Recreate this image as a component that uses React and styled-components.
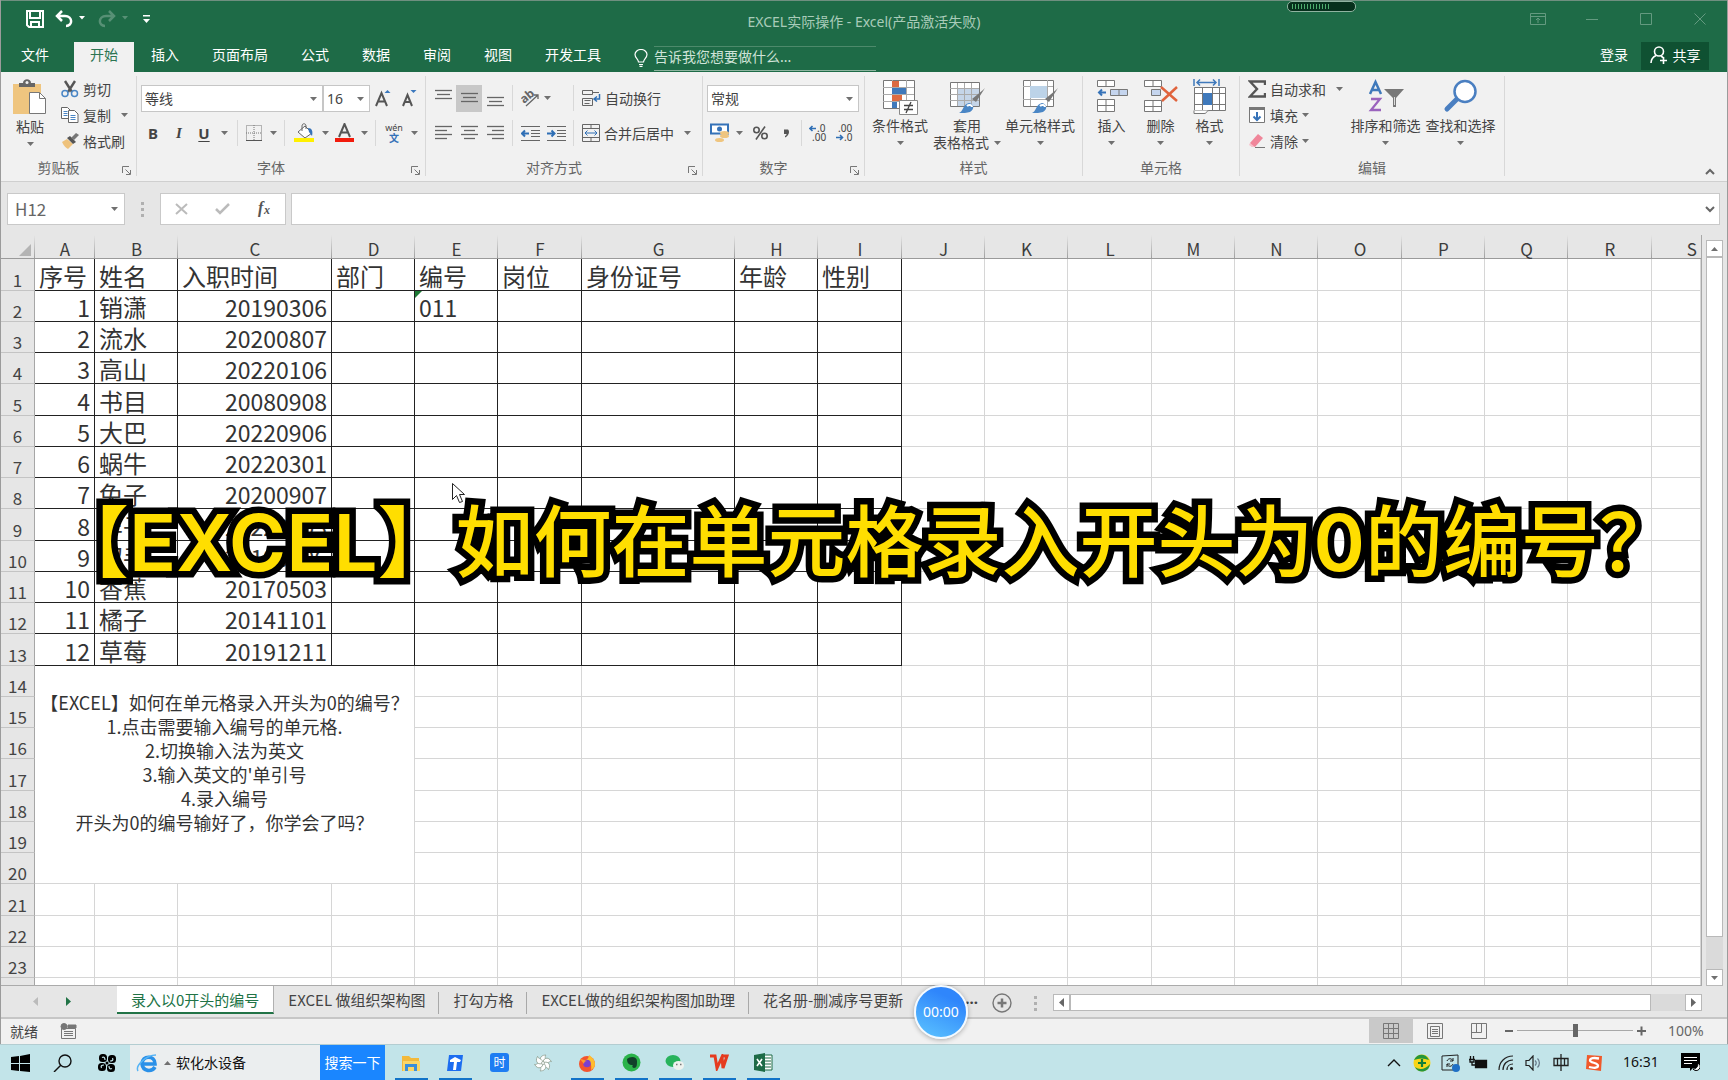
import React from 'react';
import styled, { createGlobalStyle, css } from 'styled-components';

const GlobalStyle = createGlobalStyle`
  * {
    box-sizing: border-box;
  }
  body {
    margin: 0;
    background: #c2e4e9;
    font-family: "Noto Sans", "Noto Sans CJK SC", sans-serif;
    font-size: 14px;
    color: #444;
  }
  button, input, select {
    font: inherit;
    color: inherit;
    border: 0;
    padding: 0;
    margin: 0;
    background: none;
    border-radius: 0;
  }
  svg {
    display: block;
    flex: none;
  }
`
const Screen = styled.div`
  position: relative;
  height: 100vh;
  display: flex;
  flex-direction: column;
  overflow: hidden;
`
const ExcelWindow = styled.div`
  flex: 1;
  min-height: 0;
  display: flex;
  flex-direction: column;
  border-left: 1px solid #9b9b9b;
  border-right: 1px solid #9b9b9b;
  background: #e6e6e6;
`

/* title bar */
const Header = styled.header`
  background: #1e6b47;
  border-top: 1px solid #6f8f80;
  color: #fff;
`
const TitleRow = styled.div`
  display: grid;
  grid-template-columns: 1fr auto 1fr;
  align-items: center;
  height: 41px;
`
const QuickBar = styled.div`
  display: flex;
  align-items: center;
  padding: 0 0 6px 24px;
  gap: 5px;
`
const QuickButton = styled.button`
  display: flex;
  align-items: center;
  justify-content: center;
  width: ${(p) => p.$w || 20}px;
  height: 24px;
  opacity: ${(p) => (p.$dim ? 0.25 : 1)};
`
const Title = styled.h1`
  margin: 0;
  padding-bottom: 2px;
  font-size: 14px;
  font-weight: 400;
  color: #a9cbb9;
`
const WindowButtons = styled.div`
  display: flex;
  justify-content: flex-end;
  padding-bottom: 6px;
  color: #649a80;
`
const WindowButton = styled.button`
  display: flex;
  align-items: center;
  justify-content: center;
  width: 54px;
  height: 24px;
`
const TabRow = styled.nav`
  display: flex;
  align-items: stretch;
  height: 30px;
  gap: 1px;
`
const Tab = styled.button`
  padding: 0 16px 4px;
  line-height: 20px;
  color: ${(p) => (p.$active ? '#2c7452' : '#fff')};
  background: ${(p) => (p.$active ? '#f1f1f1' : 'transparent')};
`
const FileTab = styled(Tab)`
  width: 68px;
  margin-right: 4px;
`
const SignIn = styled(Tab)`
  padding: 0 12px 4px;
`
const TellMe = styled.label`
  display: flex;
  align-items: center;
  gap: 6px;
  padding: 4px 0 2px 16px;
  margin-right: auto;
`
const TellMeInput = styled.input`
  width: 222px;
  height: 25px;
  padding-bottom: 3px;
  border-top: 1px solid #4d8a6b;
  border-bottom: 1px solid #8db5a0;
  &::placeholder {
    color: #cfe3d8;
    opacity: 1;
  }
`
const ShareButton = styled.button`
  display: flex;
  align-items: center;
  justify-content: center;
  gap: 5px;
  width: 68px;
  height: 28px;
  padding-bottom: 2px;
  margin-right: 18px;
  background: #0f5132;
  color: #fff;
`

/* ribbon */
const Ribbon = styled.section`
  display: flex;
  height: 110px;
  padding: 4px 0 5px;
  background: #f1f1f1;
  border-bottom: 1px solid #cfcfcf;
`
const GroupBox = styled.div`
  display: flex;
  flex-direction: column;
  flex: 0 0 ${(p) => p.$w}px;
  border-right: 1px solid #d8d8d8;
`
const GroupBody = styled.div`
  display: flex;
  flex: 1;
  padding-left: ${(p) => p.$pad || 4}px;
`
const GroupFoot = styled.div`
  display: flex;
  align-items: center;
  height: 18px;
  padding-right: ${(p) => (p.$launcher ? 5 : 0)}px;
  color: #666;
  span {
    flex: 1;
    padding-right: ${(p) => (p.$launcher ? 6 : 0)}px;
    text-align: center;
  }
`
const Launcher = styled.button`
  padding-top: 6px;
`
const Lines = styled.div`
  display: flex;
  flex-direction: column;
  gap: 7px;
  padding-top: 8px;
`
const Line = styled.div`
  display: flex;
  align-items: center;
  height: 28px;
`
const Tool = styled.button`
  display: flex;
  align-items: center;
  justify-content: center;
  width: ${(p) => p.$w || 26}px;
  height: 27px;
  background: ${(p) => (p.$on ? '#c8c8c8' : 'transparent')};
`
const Letter = styled.span`
  font-family: "Noto Sans", sans-serif;
  font-size: 15px;
  font-weight: 700;
  ${(p) => p.$italic && css`
    font-family: "Liberation Serif", serif;
    font-style: italic;
  `}
  ${(p) => p.$under && css`
    text-decoration: underline;
    text-underline-offset: 2px;
  `}
`
const Divider = styled.i`
  width: 1px;
  height: 26px;
  margin: 0 4px;
  background: #d8d8d8;
`
const TextTool = styled.button`
  display: flex;
  align-items: center;
  gap: 4px;
  height: 26px;
  padding: 0 4px;
  white-space: nowrap;
`
const FarCaret = styled.span`
  padding-left: ${(p) => p.$gap || 6}px;
`
const Stack = styled.div`
  width: ${(p) => p.$w}px;
`
const BigTool = styled.button`
  display: flex;
  flex-direction: column;
  align-items: center;
  align-self: flex-start;
  width: ${(p) => p.$w || 49}px;
  padding-top: 3px;
  line-height: 17px;
  white-space: nowrap;
  > svg {
    margin-bottom: 2px;
  }
`
const BigCaret = styled.span`
  display: flex;
  align-items: center;
  gap: 5px;
  height: 17px;
`
const SelectBox = styled.label`
  position: relative;
  display: flex;
  width: ${(p) => p.$w}px;
  height: 27px;
  background: #fff;
  border: 1px solid #c6c6c6;
  select {
    flex: 1;
    appearance: none;
    padding-left: 3px;
  }
  svg {
    position: absolute;
    right: 5px;
    top: 11px;
    pointer-events: none;
  }
`
const Collapse = styled.button`
  margin: auto 12px 0 auto;
  padding-bottom: 1px;
`

/* formula bar */
const FormulaBar = styled.div`
  display: flex;
  align-items: center;
  padding: 11px 7px 10px 6px;
  height: 53px;
`
const NameBox = styled.label`
  display: flex;
  align-items: center;
  width: 118px;
  height: 32px;
  padding: 0 6px 0 7px;
  background: #fff;
  border: 1px solid #c9c9c9;
  input {
    flex: 1;
    min-width: 0;
    padding-bottom: 2px;
    font-family: "Noto Sans CJK SC", sans-serif;
    font-size: 17px;
    color: #666;
  }
`
const Dots = styled.span`
  display: grid;
  gap: 3px;
  width: 3px;
  margin: ${(p) => p.$top || 0}px ${(p) => p.$m}px 0;
  i {
    width: 3px;
    height: 3px;
    background: #b0b0b0;
  }
`
const FormulaButtons = styled.div`
  display: grid;
  grid-template-columns: repeat(3, 1fr);
  align-items: center;
  justify-items: center;
  width: 126px;
  height: 32px;
  margin-right: 5px;
  background: #fff;
  border: 1px solid #c9c9c9;
`
const FormulaInput = styled.label`
  display: flex;
  align-items: center;
  flex: 1;
  height: 32px;
  padding-right: 4px;
  background: #fff;
  border: 1px solid #c9c9c9;
  input {
    flex: 1;
  }
`

/* sheet */
const SheetArea = styled.main`
  display: flex;
  flex: 1;
  min-height: 0;
`
const SheetView = styled.div`
  flex: 1;
  overflow: hidden;
  border-right: 1px solid #a8a8a8;
  border-bottom: 1px solid #ababab;
  background: #fff;
`
const Sheet = styled.table`
  width: 100%;
  table-layout: fixed;
  border-collapse: separate;
  border-spacing: 0;
  font-family: "Noto Sans CJK SC", sans-serif;
  tbody tr {
    height: 31px;
  }
  tbody tr:nth-child(4n + 1) {
    height: 32px;
  }
`
const ColHead = styled.th`
  height: 24px;
  padding: 4px 0 0;
  line-height: 19px;
  font-size: 17px;
  font-weight: 400;
  color: #3c3c3c;
  border-bottom: 1px solid #9a9a9a;
  background: linear-gradient(#e6e6e6, #a0a0a0) right / 1px 100% no-repeat #e6e6e6;
  &:last-child {
    text-align: right;
    padding-right: 4px;
    background: #e6e6e6;
  }
  svg {
    margin: 2px 4px 0 auto;
  }
`
const RowHead = styled.th`
  padding: 10px 0 0;
  line-height: 20px;
  font-size: 17px;
  font-weight: 400;
  color: #444;
  background: #e6e6e6;
  border-right: 1px solid #a6a6a6;
  border-bottom: 1px solid #c4c4c4;
`
const Cell = styled.td`
  position: relative;
  padding: 2px 4px 0;
  line-height: 26px;
  font-size: ${(p) => (p.$num ? 23 : 24)}px;
  color: #333;
  white-space: nowrap;
  text-align: ${(p) => (p.$right ? 'right' : 'left')};
  border-right: 1px solid ${(p) => (p.$framed ? '#222' : '#d6d6d6')};
  border-bottom: 1px solid ${(p) => (p.$framed ? '#222' : '#d6d6d6')};
`
const TextMark = styled.i`
  position: absolute;
  left: 0;
  top: 0;
  border-top: 7px solid #1d7a35;
  border-right: 7px solid transparent;
`
const NoteCell = styled.td`
  padding: 0 0 25px;
  vertical-align: middle;
  text-align: center;
  white-space: nowrap;
  font-size: 18px;
  line-height: 24px;
  color: #333;
  border-right: 1px solid #d6d6d6;
  border-bottom: 1px solid #d6d6d6;
  p {
    margin: 0;
  }
`
const VScroll = styled.div`
  display: flex;
  flex-direction: column;
  width: 17px;
  margin: 5px 4px 0;
`
const ScrollButton = styled.button`
  display: flex;
  align-items: center;
  justify-content: center;
  flex: none;
  width: 17px;
  height: 17px;
  background: #fff;
  border: 1px solid #b9b9b9;
`
const VTrack = styled.div`
  flex: 1;
  padding-bottom: 32px;
  background: #dadada;
`
const Thumb = styled.div`
  height: 100%;
  flex: 1;
  background: #fff;
  border: 1px solid #b9b9b9;
`

/* sheet tabs */
const SheetTabs = styled.div`
  display: flex;
  align-items: flex-start;
  height: 33px;
  border-bottom: 2px solid #c6c6c6;
  font-size: 15px;
`
const TabArrows = styled.div`
  display: flex;
  width: 116px;
  padding-left: 18px;
  button {
    display: flex;
    justify-content: center;
    align-items: center;
    width: 33px;
    height: 30px;
  }
`
const SheetTab = styled.button`
  height: 28px;
  padding: 0 14px 2px;
  line-height: 20px;
  font-family: "Noto Sans CJK SC", sans-serif;
  white-space: nowrap;
  background: linear-gradient(#a8a8a8, #a8a8a8) right 5px / 1px 22px no-repeat;
  ${(p) => p.$active && css`
    padding: 2px 14px 0;
    color: #217346;
    background: #fff;
    border-right: 1px solid #b0b0b0;
    border-bottom: 2px solid #217346;
  `}
  &:last-of-type {
    background: none;
  }
`
const More = styled.span`
  margin: 2px 14px 0 48px;
  font-weight: 700;
`
const AddSheet = styled.button`
  margin: 7px 22px 0 0;
`
const HScroll = styled.div`
  display: flex;
  flex: 1;
  height: 17px;
  margin: 8px 25px 0 16px;
`
const HTrack = styled.div`
  display: flex;
  flex: 1;
  padding-right: 34px;
  background: #dadada;
`

/* status bar */
const StatusBar = styled.footer`
  display: flex;
  align-items: center;
  height: 25px;
  padding: 0 22px 2px 9px;
  background: #f1f1f1;
  gap: 22px;
`
const Views = styled.div`
  display: flex;
  margin-left: auto;
`
const ViewButton = styled.button`
  display: flex;
  align-items: center;
  justify-content: center;
  width: 44px;
  height: 25px;
  background: ${(p) => (p.$on ? '#c9c9c9' : 'transparent')};
`
const Zoom = styled.div`
  display: flex;
  align-items: center;
  gap: 4px;
  margin-left: -18px;
`
const ZoomRange = styled.input`
  appearance: none;
  width: 116px;
  height: 14px;
  background: linear-gradient(#a8a8a8, #a8a8a8) center / 100% 1px no-repeat;
  &::-webkit-slider-thumb {
    appearance: none;
    width: 5px;
    height: 13px;
    background: #666;
  }
`
const Percent = styled.span`
  width: 37px;
  color: #666;
`

/* taskbar */
const Taskbar = styled.div`
  display: flex;
  align-items: stretch;
  height: 36px;
  background: #c2e4e9;
  border-top: 1px solid #b3cdd1;
  color: #111;
`
const TaskButton = styled.button`
  display: flex;
  align-items: center;
  justify-content: center;
  width: ${(p) => p.$w || 44}px;
  background: ${(p) => (p.$open ? 'linear-gradient(#1273c8, #1273c8) center bottom / 33px 2px no-repeat' : 'none')};
`
const SearchWidget = styled.form`
  display: flex;
  align-items: center;
  width: 255px;
  background: #ebeeef;
  input {
    flex: 1;
    min-width: 0;
    margin-left: 5px;
    padding-bottom: 2px;
  }
  button {
    align-self: stretch;
    width: 65px;
    padding-bottom: 2px;
    background: #1a86ff;
    color: #fff;
    white-space: nowrap;
  }
  svg {
    margin-left: 6px;
  }
`
const Apps = styled.div`
  display: flex;
  padding-left: 4px;
`
const Tray = styled.div`
  display: flex;
  margin-left: auto;
  padding-right: 16px;
`
const Clock = styled.time`
  align-self: center;
  width: 54px;
  padding-bottom: 2px;
  text-align: center;
`

/* things floating over the desktop */
const Caption = styled.div`
  position: absolute;
  left: 0;
  right: 0;
  top: 487px;
  text-align: center;
  white-space: nowrap;
  font-family: Inter, "Noto Sans CJK SC", sans-serif;
  font-size: 78px;
  font-weight: 500;
  line-height: 112px;
  color: #ffde00;
  -webkit-text-stroke: 13px #000;
  paint-order: stroke fill;
  stroke-linejoin: round;
  pointer-events: none;
  b {
    font-weight: 600;
  }
`
const Recorder = styled.div`
  position: absolute;
  left: 914px;
  bottom: 41px;
  display: flex;
  align-items: center;
  justify-content: center;
  width: 54px;
  height: 54px;
  padding-bottom: 2px;
  border: 2px solid #f4faff;
  border-radius: 50%;
  background: linear-gradient(25deg, #5cc4ff, #2f86fb 75%);
  box-shadow: 0 1px 5px rgba(0, 0, 0, 0.3);
  color: #fff;
`
const Meter = styled.div`
  position: absolute;
  right: 372px;
  top: 1px;
  width: 69px;
  height: 11px;
  padding: 2px 24px 2px 4px;
  border: 1px solid #8fb3a0;
  border-radius: 5px;
  background: #06301c;
  i {
    display: block;
    height: 5px;
    background: repeating-linear-gradient(90deg, #4fae6d 0 1px, transparent 1px 3px);
  }
`
const Pointer = styled.svg`
  position: absolute;
  left: 451px;
  top: 482px;
`

const Caret = ({ up }) => (
  <svg width="7" height="4" viewBox="0 0 7 4" fill="#707070">
    <path d={up ? 'M0 4h7L3.5 0z' : 'M0 0h7L3.5 4z'} />
  </svg>
)

const Rules = ({ rows, y = 0 }) => (
  <svg width="17" height="18" stroke="#666" strokeWidth="1.3">
    {rows.map(([x, w], i) => <path key={i} d={`M${x} ${y + 1.5 + i * 4}h${w}`} />)}
  </svg>
)

const Indent = ({ right }) => (
  <svg width="19" height="17" fill="none" stroke="#666" strokeWidth="1.2">
    <path d="M0 1.5h19M10 5.5h9M10 8.5h9M10 11.5h9M0 15.5h19" />
    <path d={right ? 'M0 8.5h7M4.500 5.500l3 3-3 3' : 'M8 8.500H1M4 5.500l-3 3 3 3'} stroke="#2f6fb5" strokeWidth="2" />
  </svg>
)

const Decimal = ({ less }) => (
  <svg width="20" height="18" fontFamily="Noto Sans" fontSize="10" fill="#444">
    <text x={less ? 3 : 8} y="8">{less ? '.00' : '.0'}</text>
    <text x={less ? 9 : 3} y="17">{less ? '.0' : '.00'}</text>
    <path
      d={less ? 'M1 13.500h6M5 11l2.500 2.500L5 16' : 'M7 4.500H1M3.500 2L1 4.500 3.500 7'}
      fill="none" stroke="#2f6fb5" strokeWidth="1.6"
    />
  </svg>
)

const Scissors = () => (
  <svg width="18" height="18" fill="none">
    <path d="M4 1l7 11M14 1L7 12" stroke="#555" strokeWidth="2.4" />
    <circle cx="4" cy="13.500" r="3" stroke="#4a86c5" strokeWidth="1.5" />
    <circle cx="13.500" cy="13.500" r="3" stroke="#4a86c5" strokeWidth="1.500" />
  </svg>
)
const CopyIcon = () => (
  <svg width="18" height="18" fill="#fff" stroke="#666">
    <path d="M.5 1.500h6l3 3v8h-9z" />
    <path d="M7.500 4.500h6l3.500 3.500v8.500H7.500z" />
    <path d="M2.500 5.500h4M2.500 7.500h4M2.500 9.500h4M9.500 9.500h5M9.500 11.500h5M9.500 13.500h5" stroke="#4a86c5" />
  </svg>
)
const PainterIcon = () => (
  <svg width="18" height="18">
    <path d="M1 10l5-3 6 5-5 5c-2-1-4-3-6-7z" fill="#eec27c" />
    <path d="M6 6l3-2 6 6-3 2z" fill="#555" />
    <path d="M10 6l5-5 3 2-5 5z" fill="#777" />
  </svg>
)
const PasteIcon = () => (
  <svg width="34" height="37">
    <path d="M0 5h28v30H0z" fill="#efc57f" />
    <path d="M6 8V4h4c0-5 8-5 8 0h4v4z" fill="#666" />
    <circle cx="14" cy="3.500" r="1.500" fill="#f1f1f1" />
    <path d="M16.500 13.500h10l6 6v15h-16z" fill="#fff" stroke="#777" />
    <path d="M26.500 13.500v6h6" fill="none" stroke="#777" />
  </svg>
)
const BucketIcon = () => (
  <svg width="20" height="20">
    <path d="M4 9l7-6 7 7-7 5z" fill="#fff" stroke="#666" />
    <path d="M8 8V3c0-3 4-3 4 0v3" fill="none" stroke="#666" />
    <path d="M14 5c4 0 5 3 4 8l-3-4z" fill="#3572b8" />
    <path d="M0 15h20v4H0z" fill="#fff000" />
  </svg>
)
const FontColorIcon = () => (
  <svg width="19" height="20">
    <path d="M4 14L9.500 1 15 14M6 9.500h7" fill="none" stroke="#555" strokeWidth="2" />
    <path d="M0 15h19v4H0z" fill="#f21b0c" />
  </svg>
)
const PhoneticIcon = () => (
  <svg width="20" height="22" textAnchor="middle">
    <text x="10" y="9" fontSize="9" fill="#444">wén</text>
    <text x="10" y="20" fontSize="10" fontWeight="700" fill="#3572b8">文</text>
  </svg>
)
const SizeIcon = ({ small }) => (
  <svg width="17" height="18">
    <path d={small ? 'M2 17L6.500 6 11 17M4 13h5' : 'M1 17L6.500 4 12 17M3 12.500h7'} fill="none" stroke="#555" strokeWidth="2" />
    <path d={small ? 'M9.500 1h6l-3 3z' : 'M9.500 4h6l-3-3z'} fill="#3b78bd" />
  </svg>
)
const BordersIcon = () => (
  <svg width="17" height="17" fill="none" stroke="#777" strokeDasharray="1 1">
    <path d="M.5 .5h15v15H.5zM8 0v16M0 8h16" />
    <path d="M0 15.500h16" strokeDasharray="none" stroke="#555" />
  </svg>
)
const AngleIcon = () => (
  <svg width="19" height="18">
    <text x="0" y="11" fontSize="12" fontWeight="700" fill="#666" transform="rotate(-40 7 9)">ab</text>
    <path d="M5 17L17 6M13 6h4v4" fill="none" stroke="#666" strokeWidth="1.300" />
  </svg>
)
const WrapIcon = () => (
  <svg width="19" height="18" fill="none" stroke="#666">
    <path d="M.5 1.500h10v4H.5zM.5 9.500h10v7H.5z" />
    <path d="M10 3.500h7M2.500 11.500h6M2.500 14.500h5" />
    <path d="M17.500 5v5h-5M15 7.500L12 10l3 2.500" stroke="#2f6fb5" strokeWidth="1.500" />
  </svg>
)
const MergeIcon = () => (
  <svg width="18" height="18" fill="none" stroke="#666">
    <path d="M.5 .5h17v17H.5zM.5 4.500h17M.5 13.500h17M9 .5v4M9 13.500v4" />
    <path d="M3 9h12M5.500 6.500L3 9l2.500 2.500M12.500 6.500L15 9l-2.500 2.500" stroke="#2f6fb5" />
  </svg>
)
const MoneyIcon = () => (
  <svg width="20" height="20">
    <path d="M1 1.500h17v9H1z" fill="#fff" stroke="#3572b8" strokeWidth="2" />
    <circle cx="9.500" cy="6" r="2.500" fill="#3572b8" />
    <ellipse cx="14.500" cy="10" rx="4.500" ry="2" fill="#efc57f" />
    <ellipse cx="14.500" cy="13" rx="4.500" ry="2" fill="#efc57f" />
    <ellipse cx="9.500" cy="17" rx="4.500" ry="2" fill="#efc57f" />
  </svg>
)
const PercentIcon = () => (
  <svg width="15" height="14" fill="none" stroke="#555" strokeWidth="1.600">
    <circle cx="3.500" cy="4" r="2.700" />
    <circle cx="11.500" cy="10" r="2.700" />
    <path d="M12 .5L3 13.500" />
  </svg>
)
const CommaIcon = () => (
  <svg width="7" height="9">
    <path d="M1 .5h4c2 2 1 6-3 8V7c1-.5 1.500-1 1.500-2H1z" fill="#555" />
  </svg>
)
const Brush = () => (
  <>
    <path d="M36 9l-9 14-4-3L34 11z" fill="#777" />
    <path d="M10 34c4-1 4-9 10-10 5 1 6 6 1 9-3 1-7 1-11 1z" fill="#4a86c5" />
    <path d="M18 27c2-2 5-1 5 1" fill="none" stroke="#fff" strokeWidth="2" />
  </>
)
const CondIcon = () => (
  <svg width="36" height="36">
    <path d="M1.500 1.500h31v28h-31z" fill="#fff" stroke="#777" />
    <path d="M10.500 1v28M24.500 1v28M1 8.500h31M1 15.500h31M1 22.500h31" stroke="#aaa" />
    <path d="M10 2h7v6h-7zM10 16h10v6H10z" fill="#dd6b42" />
    <path d="M10 9h14v6H10zM10 23h5v6h-5z" fill="#3f79bb" />
    <path d="M17.500 21.500h18v14h-18z" fill="#fff" stroke="#888" />
    <path d="M22 26.500h9M22 30.500h9M29 23l-5 11" stroke="#444" strokeWidth="1.300" />
  </svg>
)
const TableIcon = () => (
  <svg width="36" height="36">
    <path d="M1.500 3.500h29v24h-29z" fill="#fff" stroke="#777" />
    <path d="M8 9h22v18H8z" fill="#c5d5e8" />
    <path d="M8.500 4v23M15.500 4v23M22.500 4v23M1 9.500h29M1 15.500h29M1 21.500h29" stroke="#aaa" />
    <Brush />
  </svg>
)
const CellStyleIcon = () => (
  <svg width="36" height="36">
    <path d="M1.500 1.500h30v26h-30z" fill="#fff" stroke="#777" />
    <path d="M8.500 1v26M25.500 1v26M1 7.500h30M1 20.500h30" stroke="#aaa" />
    <path d="M8 7h17v12H8z" fill="#bcd3e8" />
    <Brush />
  </svg>
)
const InsertIcon = () => (
  <svg width="34" height="36" fill="#fff" stroke="#777">
    <path d="M2.500 1.500h17v6h-17zM11 1.500v6M2.500 20.500h17v12h-17zM11 20v12M2.500 26.500h17" />
    <path d="M15.500 10.500h17v6h-17zM24 10.500v6" fill="#c5d5ee" />
    <path d="M11 13.500H4M7 10.500l-3 3 3 3" fill="none" stroke="#3572b8" strokeWidth="2" />
  </svg>
)
const DeleteIcon = () => (
  <svg width="36" height="36" fill="#fff" stroke="#777">
    <path d="M1.500 1.500h17v6h-17zM10 1.500v6M1.500 21.500h17v11h-17zM10 21v11M1.500 27.500h17" />
    <path d="M8.500 10.500h9v6h-9z" fill="#c5d5ee" />
    <path d="M18 8l16 14M34 8L19 22" fill="none" stroke="#e0633c" strokeWidth="2.500" />
  </svg>
)
const FormatIcon = () => (
  <svg width="36" height="36" fill="#fff" stroke="#777">
    <path d="M2.500 8.500h31v23h-31zM10.500 8v23M20.500 8v23M27.500 8v23M2 14.500h31M2 25.500h31" />
    <path d="M11 14h9v12h-9z" fill="#3f79bb" stroke="none" />
    <path d="M2 31.500v3h10c4 0 1-3 6-3" />
    <path d="M2 0v7M27 0v7M5 3.500h19M8 .5l-3 3 3 3M21 .5l3 3-3 3" fill="none" stroke="#3f79bb" strokeWidth="1.500" />
  </svg>
)
const SigmaIcon = () => (
  <svg width="18" height="18">
    <path d="M17 5V1.500H2L9 9l-7 7.500h15V13" fill="none" stroke="#555" strokeWidth="2.400" />
  </svg>
)
const FillIcon = () => (
  <svg width="18" height="18">
    <path d="M1.500 1.500h15v15h-15z" fill="#fff" stroke="#777" />
    <path d="M1 1h16v3H1z" fill="#777" />
    <path d="M9 6v8M5.500 10.500L9 14l3.500-3.500" fill="none" stroke="#3572b8" strokeWidth="2" />
  </svg>
)
const EraserIcon = () => (
  <svg width="18" height="18">
    <path d="M2 11L10 2l5 4-8 9H4z" fill="#f0869a" />
    <path d="M2 11l5 4H4l-3-2z" fill="#f8c0ca" />
    <path d="M7 15.500h10" stroke="#777" />
  </svg>
)
const SortIcon = () => (
  <svg width="36" height="36" fill="none">
    <path d="M2 15L7.500 3 13 15M4 11h7" stroke="#3f79bb" strokeWidth="2.500" />
    <path d="M3 20h9L3 31h10" stroke="#9a63bd" strokeWidth="2.300" />
    <path d="M16 10h20l-8 9v9h-3v-9z" fill="#777" />
    <path d="M26.500 18v8" stroke="#ddd" />
  </svg>
)
const FindIcon = () => (
  <svg width="36" height="36">
    <path d="M4 30L14 20" stroke="#4a7fc1" strokeWidth="5" strokeLinecap="round" />
    <circle cx="22" cy="12.500" r="10.500" fill="#fff" stroke="#4a7fc1" strokeWidth="2.500" />
  </svg>
)

const Group = ({ label, w, pad, launcher, children }) => (
  <GroupBox $w={w}>
    <GroupBody $pad={pad}>{children}</GroupBody>
    <GroupFoot $launcher={launcher}>
      <span>{label}</span>
      {launcher && (
        <Launcher aria-label={label}>
          <svg width="9" height="9" fill="none" stroke="#777">
            <path d="M.5 7V.5H7M3.500 3.500L8 8M8.500 4v4.500H4" />
          </svg>
        </Launcher>
      )}
    </GroupFoot>
  </GroupBox>
)

const Picker = ({ w, value, label }) => (
  <SelectBox $w={w}>
    <select aria-label={label} defaultValue={value}>
      <option>{value}</option>
    </select>
    <Caret />
  </SelectBox>
)

const tabs = ['开始', '插入', '页面布局', '公式', '数据', '审阅', '视图', '开发工具']
const columns = 'ABCDEFGHIJKLMNOPQRS'.split('')
const widths = [60, 83, 154, 83, 83, 84, 153, 83, 84, 83, 83, 84, 83, 83, 84, 83, 83, 84]
const titles = ['序号', '姓名', '入职时间', '部门', '编号', '岗位', '身份证号', '年龄', '性别']
const people = [
  ['销潇', '20190306', '011'],
  ['流水', '20200807'],
  ['高山', '20220106'],
  ['书目', '20080908'],
  ['大巴', '20220906'],
  ['蜗牛', '20220301'],
  ['兔子', '20200907'],
  ['样子', '20220103'],
  ['招手', '20190206'],
  ['香蕉', '20170503'],
  ['橘子', '20141101'],
  ['草莓', '20191211'],
]
const notes = [
  '【EXCEL】如何在单元格录入开头为0的编号？',
  '1.点击需要输入编号的单元格.',
  '2.切换输入法为英文',
  "3.输入英文的'单引号",
  '4.录入编号',
  '开头为0的编号输好了，你学会了吗？',
]
const sheets = ['录入以0开头的编号', 'EXCEL 做组织架构图', '打勾方格', 'EXCEL做的组织架构图加助理', '花名册-删减序号更新']

const TitleBar = () => (
  <Header>
    <TitleRow>
      <QuickBar>
        <QuickButton aria-label="保存">
          <svg width="18" height="18" fill="none" stroke="#fff" strokeWidth="2">
            <path d="M1 1h16v16H3l-2-2zM4 1v7h10V1M5 17v-5h8v5" />
          </svg>
        </QuickButton>
        <QuickButton aria-label="撤消" $w={40}>
          <svg width="30" height="18" fill="none" stroke="#fff" strokeWidth="2.500">
            <path d="M7 1L2 6l5 5M2 6h8c8 0 8 10 1 10" />
            <path d="M24 6h6l-3 3.500z" fill="#fff" stroke="none" />
          </svg>
        </QuickButton>
        <QuickButton aria-label="恢复" $w={36} $dim>
          <svg width="30" height="18" fill="none" stroke="#fff" strokeWidth="2.500">
            <path d="M11 1l5 5-5 5M16 6H8C0 6 0 16 7 16" />
            <path d="M24 6h6l-3 3.500z" fill="#fff" stroke="none" />
          </svg>
        </QuickButton>
        <QuickButton aria-label="自定义快速访问工具栏">
          <svg width="7" height="8" fill="#fff"><path d="M0 0h7v1.500H0zM0 4h7L3.500 8z" /></svg>
        </QuickButton>
      </QuickBar>
      <Title>EXCEL实际操作 - Excel(产品激活失败)</Title>
      <WindowButtons>
        <WindowButton aria-label="功能区显示选项">
          <svg width="16" height="12" fill="none" stroke="currentColor"><path d="M.5 .5h15v11H.5zM.5 3.500h15M8 10V5M6 7l2-2 2 2" /></svg>
        </WindowButton>
        <WindowButton aria-label="最小化">
          <svg width="12" height="12" stroke="currentColor"><path d="M0 6.500h12" /></svg>
        </WindowButton>
        <WindowButton aria-label="最大化">
          <svg width="12" height="12" fill="none" stroke="currentColor"><path d="M.5 .5h11v11H.5z" /></svg>
        </WindowButton>
        <WindowButton aria-label="关闭">
          <svg width="12" height="12" stroke="currentColor"><path d="M.5 .5l11 11M11.500 .5l-11 11" /></svg>
        </WindowButton>
      </WindowButtons>
    </TitleRow>
    <TabRow>
      <FileTab>文件</FileTab>
      {tabs.map((t, i) => <Tab key={t} $active={i === 0}>{t}</Tab>)}
      <TellMe>
        <svg width="14" height="18" fill="none" stroke="#fff" strokeWidth="1.200">
          <path d="M4.500 13c0-3-3.500-4-3.500-7.500a6 5 0 0 1 12 0c0 3.500-3.500 4.500-3.500 7.500zM5 15.500h4M5.500 17.300h3" />
        </svg>
        <TellMeInput aria-label="告诉我您想要做什么" placeholder="告诉我您想要做什么..." />
      </TellMe>
      <SignIn>登录</SignIn>
      <ShareButton>
        <svg width="18" height="18" fill="none" stroke="#fff" strokeWidth="1.600">
          <circle cx="9" cy="5.500" r="4.500" />
          <path d="M1 17c0-4 2-6 5-7.500M11 10l2 1.500M10 14.500h7M13.500 11v7" />
        </svg>
        共享
      </ShareButton>
    </TabRow>
  </Header>
)

const RibbonBar = () => (
  <Ribbon>
    <Group label="剪贴板" w={136} pad={2} launcher>
      <BigTool $w={54}>
        <PasteIcon />
        <span>粘贴</span>
        <BigCaret><Caret /></BigCaret>
      </BigTool>
      <Stack $w={78}>
        <TextTool><Scissors />剪切</TextTool>
        <TextTool><CopyIcon />复制<FarCaret><Caret /></FarCaret></TextTool>
        <TextTool><PainterIcon />格式刷</TextTool>
      </Stack>
    </Group>
    <Group label="字体" w={289} launcher>
      <Lines>
        <Line>
          <Picker w={182} value="等线" label="字体" />
          <Picker w={47} value="16" label="字号" />
          <Tool aria-label="增大字号"><SizeIcon /></Tool>
          <Tool aria-label="减小字号"><SizeIcon small /></Tool>
        </Line>
        <Line>
          <Tool $w={24}><Letter>B</Letter></Tool>
          <Tool $w={28}><Letter $italic>I</Letter></Tool>
          <Tool $w={22}><Letter $under>U</Letter></Tool>
          <Tool $w={18} aria-label="下划线选项"><Caret /></Tool>
          <Divider />
          <Tool $w={24} aria-label="边框"><BordersIcon /></Tool>
          <Tool $w={14} aria-label="边框选项"><Caret /></Tool>
          <Divider />
          <Tool $w={30} aria-label="填充颜色"><BucketIcon /></Tool>
          <Tool $w={12} aria-label="填充颜色选项"><Caret /></Tool>
          <Tool aria-label="字体颜色"><FontColorIcon /></Tool>
          <Tool $w={14} aria-label="字体颜色选项"><Caret /></Tool>
          <Divider />
          <Tool $w={28} aria-label="拼音"><PhoneticIcon /></Tool>
          <Tool $w={12} aria-label="拼音选项"><Caret /></Tool>
        </Line>
      </Lines>
    </Group>
    <Group label="对齐方式" w={277} launcher>
      <Lines>
        <Line>
          <Tool aria-label="顶端对齐"><Rules rows={[[0, 17], [2, 13], [0, 17]]} /></Tool>
          <Tool aria-label="垂直居中" $on><Rules y={3} rows={[[0, 17], [2, 13], [0, 17]]} /></Tool>
          <Tool aria-label="底端对齐"><Rules y={7} rows={[[0, 17], [2, 13], [0, 17]]} /></Tool>
          <Divider />
          <TextTool><AngleIcon /><Caret /></TextTool>
          <Tool $w={14} as="span" />
          <Divider />
          <TextTool><WrapIcon />自动换行</TextTool>
        </Line>
        <Line>
          <Tool aria-label="左对齐"><Rules y={1} rows={[[0, 17], [0, 12], [0, 17], [0, 12]]} /></Tool>
          <Tool aria-label="居中"><Rules y={1} rows={[[0, 17], [3, 11], [0, 17], [3, 11]]} /></Tool>
          <Tool aria-label="右对齐"><Rules y={1} rows={[[0, 17], [5, 12], [0, 17], [5, 12]]} /></Tool>
          <Divider />
          <Tool aria-label="减少缩进量"><Indent /></Tool>
          <Tool aria-label="增加缩进量"><Indent right /></Tool>
          <Divider />
          <TextTool><MergeIcon />合并后居中<FarCaret><Caret /></FarCaret></TextTool>
        </Line>
      </Lines>
    </Group>
    <Group label="数字" w={162} launcher>
      <Lines>
        <Line><Picker w={152} value="常规" label="数字格式" /></Line>
        <Line>
          <Tool aria-label="会计数字格式"><MoneyIcon /></Tool>
          <Tool $w={12} aria-label="会计数字格式选项"><Caret /></Tool>
          <Tool $w={30} aria-label="百分比样式"><PercentIcon /></Tool>
          <Tool $w={22} aria-label="千位分隔样式"><CommaIcon /></Tool>
          <Divider />
          <Tool aria-label="增加小数位数"><Decimal /></Tool>
          <Tool aria-label="减少小数位数"><Decimal less /></Tool>
        </Line>
      </Lines>
    </Group>
    <Group label="样式" w={218} pad={1}>
      <BigTool $w={68}><CondIcon /><span>条件格式</span><BigCaret><Caret /></BigCaret></BigTool>
      <BigTool $w={66}><TableIcon /><span>套用</span><BigCaret>表格格式<Caret /></BigCaret></BigTool>
      <BigTool $w={80}><CellStyleIcon /><span>单元格样式</span><BigCaret><Caret /></BigCaret></BigTool>
    </Group>
    <Group label="单元格" w={157}>
      <BigTool><InsertIcon /><span>插入</span><BigCaret><Caret /></BigCaret></BigTool>
      <BigTool><DeleteIcon /><span>删除</span><BigCaret><Caret /></BigCaret></BigTool>
      <BigTool><FormatIcon /><span>格式</span><BigCaret><Caret /></BigCaret></BigTool>
    </Group>
    <Group label="编辑" w={265}>
      <Stack $w={104}>
        <TextTool><SigmaIcon />自动求和<FarCaret><Caret /></FarCaret></TextTool>
        <TextTool><FillIcon />填充<Caret /></TextTool>
        <TextTool><EraserIcon />清除<Caret /></TextTool>
      </Stack>
      <BigTool $w={75}><SortIcon /><span>排序和筛选</span><BigCaret><Caret /></BigCaret></BigTool>
      <BigTool $w={75}><FindIcon /><span>查找和选择</span><BigCaret><Caret /></BigCaret></BigTool>
    </Group>
    <Collapse aria-label="折叠功能区">
      <svg width="10" height="7" fill="none" stroke="#666" strokeWidth="2"><path d="M1 6l4-4 4 4" /></svg>
    </Collapse>
  </Ribbon>
)

const Formula = () => (
  <FormulaBar>
    <NameBox>
      <input aria-label="名称框" defaultValue="H12" />
      <Caret />
    </NameBox>
    <Dots $m={16}><i /><i /><i /></Dots>
    <FormulaButtons>
      <button aria-label="取消"><svg width="13" height="12" stroke="#bbb" strokeWidth="2"><path d="M1 1l11 10M12 1L1 11" /></svg></button>
      <button aria-label="输入"><svg width="15" height="12" fill="none" stroke="#bbb" strokeWidth="2.500"><path d="M1 6l4 4 9-9" /></svg></button>
      <button aria-label="插入函数">
        <svg width="15" height="16" fontFamily="Liberation Serif" fontStyle="italic" fontWeight="700" fill="#555">
          <text x="1" y="12" fontSize="16">f</text>
          <text x="7" y="13" fontSize="12">x</text>
        </svg>
      </button>
    </FormulaButtons>
    <FormulaInput>
      <input aria-label="编辑栏" />
      <svg width="10" height="7" fill="none" stroke="#666" strokeWidth="2"><path d="M1 1l4 4 4-4" /></svg>
    </FormulaInput>
  </FormulaBar>
)

class Grid extends React.Component {
  cellText = (row, col) => {
    if (row === 1) return titles[col]
    const person = people[row - 2]
    if (!person) return null
    if (col === 0) return row - 1
    if (col === 1) return person[0]
    if (col === 2) return person[1]
    if (col === 4) return person[2]
    return null
  };

  renderRow = (row) => {
    const cells = columns.map((c, col) => {
      if (row >= 14 && row <= 20 && col < 4) {
        return row === 14 && col === 0 ? (
          <NoteCell key={c} colSpan={4} rowSpan={7}>
            {notes.map((n) => <p key={n}>{n}</p>)}
          </NoteCell>
        ) : null
      }
      return (
        <Cell
          key={c}
          $framed={row <= 13 && col < 9}
          $num={row > 1 && col !== 1}
          $right={row > 1 && (col === 0 || col === 2)}
        >
          {row === 2 && col === 4 && <TextMark />}
          {this.cellText(row, col)}
        </Cell>
      )
    })
    return (
      <tr key={row}>
        <RowHead scope="row">{row}</RowHead>
        {cells}
      </tr>
    )
  };

  render() {
    const rows = Array.from({ length: 24 }, (_, i) => i + 1)
    return (
      <Sheet>
        <colgroup>
          <col width="34" />
          {widths.map((w, i) => <col key={i} width={w} />)}
          <col />
        </colgroup>
        <thead>
          <tr>
            <ColHead aria-label="全选"><svg width="12" height="12"><path d="M12 0v12H0z" fill="#b4b4b4" /></svg></ColHead>
            {columns.map((c) => <ColHead key={c} scope="col">{c}</ColHead>)}
          </tr>
        </thead>
        <tbody>{rows.map(this.renderRow)}</tbody>
      </Sheet>
    )
  }
}

const SheetBar = () => (
  <SheetTabs>
    <TabArrows>
      <button aria-label="上一个"><svg width="5" height="9" fill="#bbb"><path d="M5 0v9L0 4.500z" /></svg></button>
      <button aria-label="下一个"><svg width="5" height="9" fill="#217346"><path d="M0 0v9l5-4.500z" /></svg></button>
    </TabArrows>
    <div>
      {sheets.map((s, i) => <SheetTab key={s} $active={i === 0}>{s}</SheetTab>)}
    </div>
    <More>...</More>
    <AddSheet aria-label="新工作表">
      <svg width="20" height="20" fill="none" stroke="#777">
        <circle cx="10" cy="10" r="9" strokeWidth="1.400" />
        <path d="M5.500 10h9M10 5.500v9" strokeWidth="2.500" />
      </svg>
    </AddSheet>
    <Dots $m={0} $top={10}><i /><i /><i /></Dots>
    <HScroll>
      <ScrollButton aria-label="向左滚动"><svg width="5" height="9" fill="#666"><path d="M5 0v9L0 4.500z" /></svg></ScrollButton>
      <HTrack><Thumb /></HTrack>
      <ScrollButton aria-label="向右滚动"><svg width="5" height="9" fill="#666"><path d="M0 0v9l5-4.500z" /></svg></ScrollButton>
    </HScroll>
  </SheetTabs>
)

const Status = () => (
  <StatusBar>
    <span>就绪</span>
    <svg width="17" height="16" fill="none" stroke="#777">
      <path d="M1.500 5.500h14v10h-14zM4 8.500h9M4 10.500h9M4 12.500h9" />
      <path d="M8 2h8v3H8z" fill="#777" />
      <circle cx="4" cy="3.500" r="3" fill="#777" />
    </svg>
    <Views>
      <ViewButton $on aria-label="普通">
        <svg width="16" height="16" fill="none" stroke="#777"><path d="M.5 .5h15v15H.5zM.5 5.500h15M.5 10.500h15M5.500 .5v15M10.500 .5v15" /></svg>
      </ViewButton>
      <ViewButton aria-label="页面布局">
        <svg width="16" height="16" fill="none" stroke="#777"><path d="M.5 .5h15v15H.5zM3.500 3.500h9v10h-9zM5 6.500h6M5 8.500h6M5 10.500h6" /></svg>
      </ViewButton>
      <ViewButton aria-label="分页预览">
        <svg width="16" height="16" fill="none" stroke="#777"><path d="M.5 .5h15v15H.5zM5.500 .5v9M10.500 .5v9M.5 9.500h10" /></svg>
      </ViewButton>
    </Views>
    <Zoom>
      <button aria-label="缩小"><svg width="8" height="10"><path d="M0 4h8v2H0z" fill="#666" /></svg></button>
      <ZoomRange type="range" aria-label="缩放" min="10" max="190" defaultValue="100" />
      <button aria-label="放大"><svg width="9" height="10"><path d="M0 4h9v2H0zM3.500 .5h2v9h-2z" fill="#666" /></svg></button>
    </Zoom>
    <Percent>100%</Percent>
  </StatusBar>
)

const apps = [
  ['文件资源管理器', true, (
    <svg width="20" height="20"><path d="M1 3h7l2 2h8v13H1z" fill="#f3b93b" /><path d="M2 8h17v10H2z" fill="#fbd668" /><path d="M4 18v-7h12v7h-3v-4H7v4z" fill="#3a8edb" /></svg>
  )],
  ['腾讯文档', true, (
    <svg width="18" height="18"><path d="M3 1h14l-2 16H1z" fill="#1c6df0" /><path d="M4 6l5-3 6 3-1 2h-3l-1 8H7l1-8H4z" fill="#fff" /></svg>
  )],
  ['时', false, (
    <svg width="19" height="19"><rect width="19" height="19" rx="3" fill="#1f7df2" /><text x="9.500" y="14" fontSize="12" textAnchor="middle" fill="#fff">时</text></svg>
  )],
  ['风车', false, (
    <svg width="18" height="18" fill="#fff" stroke="#8a9a8a" strokeWidth=".7">
      {[0, 60, 120, 180, 240, 300].map((a) => <path key={a} d="M9 9C5 7 5 1 12 1c-2 2 1 5-3 8z" transform={`rotate(${a} 9 9)`} />)}
      <circle cx="9" cy="9" r="1.500" />
    </svg>
  )],
  ['Firefox', true, (
    <svg width="18" height="18"><circle cx="9" cy="10" r="8" fill="#f4552e" /><path d="M11 1c3 2 6 5 6 9 0 3-2 5-4 6 1-5 0-9-7-9 3-1 5-3 5-6z" fill="#ffbd2e" /><circle cx="9" cy="9.500" r="3.800" fill="#7b3fd0" /><path d="M2 5c2 0 4 1 7 2-2 0-3 1-3 3z" fill="#ff9a2a" /></svg>
  )],
  ['印象笔记', true, (
    <svg width="19" height="19"><circle cx="9.500" cy="9.500" r="9" fill="#2bb34a" /><path d="M5 6c3-3 10-3 10 2 0 4 0 7-3 7-2 0-2-3-1-3-2 0-6 0-6-6z" fill="#12402a" /></svg>
  )],
  ['微信', true, (
    <svg width="20" height="18"><ellipse cx="8" cy="7" rx="7.500" ry="6" fill="#27b35c" /><ellipse cx="13.500" cy="11.500" rx="5.500" ry="4.500" fill="#eef3ef" /><path d="M11 10.500h1.500M15 10.500h1.500" stroke="#777" strokeWidth="1.500" /></svg>
  )],
  ['WPS', true, (
    <svg width="19" height="17" fill="none" stroke="#e53b1f" strokeWidth="3"><path d="M0 2h5l2 12 5-11 1 11 4-12h-5" /></svg>
  )],
  ['Excel', true, (
    <svg width="19" height="19"><path d="M9 2h9v15H9z" fill="#fff" stroke="#1e6b47" /><path d="M11 5h6M11 8h6M11 11h6M11 14h6" stroke="#1e6b47" /><path d="M0 2l11-2v19L0 17z" fill="#1e6b47" /><path d="M3 6l5 7M8 6l-5 7" stroke="#fff" strokeWidth="1.600" /></svg>
  )],
]

const tray = [
  ['显示隐藏的图标', 28, <svg width="14" height="8" fill="none" stroke="#111" strokeWidth="1.400"><path d="M1 7l6-6 6 6" /></svg>],
  ['安全卫士', 28, (
    <svg width="18" height="18"><circle cx="9" cy="9" r="8.500" fill="#f7d518" /><path d="M1 6c3-7 12-7 15 0-5-2-10-2-15 0zM2 13c4 3 10 3 15-3-1 9-12 10-15 3z" fill="#25963a" /><path d="M5 9h8M9 5v8" stroke="#12803a" strokeWidth="2.200" /></svg>
  )],
  ['更新', 28, (
    <svg width="19" height="18" fill="none" stroke="#222"><path d="M1 2l16-1v15H1zM6 7c1-3 5-3 6 0M12 10c-1 3-5 3-6 0M12 4v3H9M6 13v-3h3" /><circle cx="15" cy="14" r="4" fill="#1f6fc5" stroke="none" /></svg>
  )],
  ['电源', 28, (
    <svg width="19" height="14" fill="none" stroke="#111" strokeWidth="1.300"><path d="M6.500 4.500h11v7h-11z" fill="#111" /><path d="M1.500 0v3M4.500 0v3M0 3.500h6M1 4v2h4V4M3 6v3h3" /></svg>
  )],
  ['网络', 28, (
    <svg width="16" height="16" fill="none" stroke="#222" strokeWidth="1.200"><path d="M1 15C1 7 7 1 15 1M5 15C5 9 9 5 15 5M9 15c0-3 2-6 6-6" /><circle cx="13.500" cy="13.500" r="1" fill="#222" /></svg>
  )],
  ['音量', 27, (
    <svg width="17" height="16" fill="none" stroke="#222" strokeWidth="1.200"><path d="M1 5.500h3L8 1v14l-4-4.500H1z" /><path d="M10 5.500c1.500 1.500 1.500 3.500 0 5M12.500 3.500c2.500 2.500 2.500 6.500 0 9" stroke="#678" /></svg>
  )],
  ['输入法', 27, (
    <svg width="16" height="17" fill="none" stroke="#222" strokeWidth="1.300"><path d="M1 4.500h14v7H1zM8 0v17M4.500 4.500v7M11.500 4.500v7" /></svg>
  )],
  ['搜狗输入法', 40, (
    <svg width="18" height="18"><path d="M2 1l15 1-1 15-15-2z" fill="#f0592a" /><path d="M14 4.500C9 3.500 5 4 5 6.500s8 2 8 5-5 2.500-9 1.500" fill="none" stroke="#fff" strokeWidth="2.300" /></svg>
  )],
]

const Desktop = () => (
  <Taskbar>
    <TaskButton $w={41} aria-label="开始">
      <svg width="19" height="18" fill="#000"><path d="M0 3l8-1v7H0zM9 2l10-2v9H9zM0 10h8v7l-8-1zM9 10h10v8l-10-1z" /></svg>
    </TaskButton>
    <TaskButton $w={43} aria-label="搜索">
      <svg width="19" height="18" fill="none" stroke="#111" strokeWidth="1.400"><circle cx="12" cy="7" r="6" /><path d="M8 11L1 18" /></svg>
    </TaskButton>
    <TaskButton $w={46} aria-label="四叶浏览器">
      <svg width="18" height="18">
        {[0, 90, 180, 270].map((a) => (
          <g key={a} transform={`rotate(${a} 9 9)`}>
            <rect x="1" y="0" width="8" height="8" rx="3.500" fill="#000" />
            <path d="M4 3.500c2-1 3 0 3 2.500" fill="none" stroke="#c2e4e9" strokeWidth="1.200" />
          </g>
        ))}
        <circle cx="9" cy="9" r="1.500" fill="#000" />
      </svg>
    </TaskButton>
    <SearchWidget onSubmit={(e) => e.preventDefault()}>
      <svg width="22" height="20" fill="none">
        <path d="M19 14c-3 5-12 5-13-3 0-9 13-9 13 0H7" stroke="#2a90e8" strokeWidth="3.600" />
        <path d="M2 18C-1 13 10 2 20 2" stroke="#56b4f5" strokeWidth="1.500" />
      </svg>
      <Caret up />
      <input aria-label="搜索" defaultValue="软化水设备" />
      <button>搜索一下</button>
    </SearchWidget>
    <Apps>
      {apps.map(([name, open, icon]) => <TaskButton key={name} $open={open} aria-label={name}>{icon}</TaskButton>)}
    </Apps>
    <Tray>
      {tray.map(([name, w, icon]) => <TaskButton key={name} $w={w} aria-label={name}>{icon}</TaskButton>)}
      <Clock>16:31</Clock>
      <TaskButton aria-label="通知">
        <svg width="19" height="19"><path d="M0 0h19v15h-7l-3 3v-3H0z" fill="#000" /><path d="M3 4.500h13M3 7.500h13M3 10.500h8" stroke="#fff" strokeWidth="1.200" /><path d="M17 10a4 4 0 1 1-5 6c3 0 5-2 5-6z" fill="#fff" stroke="#000" /></svg>
      </TaskButton>
    </Tray>
  </Taskbar>
)

const App = () => (
  <Screen>
    <GlobalStyle />
    <ExcelWindow>
      <TitleBar />
      <RibbonBar />
      <Formula />
      <SheetArea>
        <SheetView><Grid /></SheetView>
        <VScroll>
          <ScrollButton aria-label="向上滚动"><Caret up /></ScrollButton>
          <VTrack><Thumb /></VTrack>
          <ScrollButton aria-label="向下滚动"><Caret /></ScrollButton>
        </VScroll>
      </SheetArea>
      <SheetBar />
      <Status />
    </ExcelWindow>
    <Desktop />
    <Meter><i /></Meter>
    <Pointer width="15" height="22" fill="#fff" stroke="#222">
      <path d="M1.500 1.500v16l4-4 3 7 3-1-3-7h5z" />
    </Pointer>
    <Caption>【<b>EXCEL</b>】如何在单元格录入开头为<b>0</b>的编号？</Caption>
    <Recorder>00:00</Recorder>
  </Screen>
)

export default App;
